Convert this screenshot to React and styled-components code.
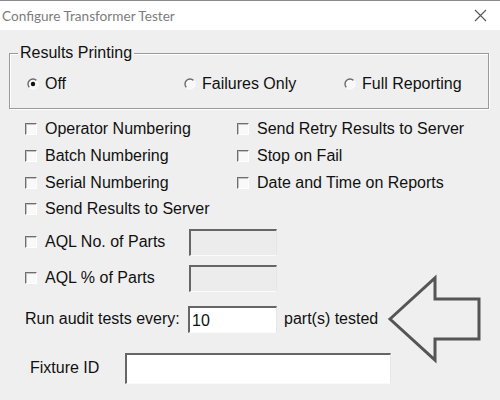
import React from 'react';
import styled, { createGlobalStyle } from 'styled-components';

const GlobalStyle = createGlobalStyle`
  html, body {
    margin: 0;
    padding: 0;
    background: #efefef;
  }
  body {
    font-family: "Liberation Sans", Arial, sans-serif;
    color: #111;
  }
`;

const Dialog = styled.div`
  position: relative;
  width: 500px;
  height: 400px;
  overflow: hidden;
  background: #efefef;
`;

const TitleBar = styled.div`
  display: flex;
  align-items: center;
  justify-content: space-between;
  height: 29px;
  background: #fff;
  border-top: 1px solid #8a8a8a;
  padding: 0 13px 0 2px;
  font-family: "Lato", "Liberation Sans", sans-serif;
  font-size: 13.6px;
  color: #7c7c7c;
`;

const Body = styled.div`
  display: flex;
  flex-direction: column;
  padding: 23px 11px 0 9px;
`;

const Group = styled.div`
  position: relative;
  box-sizing: border-box;
  height: 56px;
  border: 1px solid #9a9a9a;
  box-shadow: inset 1px 1px 0 #fff, 1px 1px 0 #fff;
  padding: 6px 0 0 17px;
  display: flex;
  align-items: center;
`;

const Legend = styled.span`
  position: absolute;
  left: 8px;
  top: -10px;
  padding: 0 2px;
  background: #efefef;
  font-size: 16px;
  line-height: 18px;
`;

const RadioRow = styled.div`
  display: grid;
  grid-template-columns: 157px 160px 1fr;
  width: 100%;
`;

const Option = styled.label`
  display: flex;
  align-items: center;
  gap: 6px;
  font-size: 16px;
`;

const CheckGrid = styled.div`
  display: grid;
  grid-template-columns: 212px 1fr;
  grid-auto-rows: 26.7px;
  padding-left: 16px;
  margin-top: 7px;
`;

const Check = styled.label`
  display: flex;
  align-items: center;
  gap: 8px;
  font-size: 16px;
  grid-column: ${(p) => p.col || 'auto'};
`;

const Box = styled.span`
  width: 10px;
  height: 10px;
  flex: none;
  background: #f9f9f9;
  border-top: 1px solid #6e6e6e;
  border-left: 1px solid #6e6e6e;
  border-right: 1px solid #fff;
  border-bottom: 1px solid #fff;
  box-shadow: inset 1px 1px 0 #c4c4c4;
`;

const FieldRow = styled.div`
  display: flex;
  align-items: center;
  height: ${(p) => p.h || 27}px;
  margin-top: ${(p) => p.mt || 0}px;
  padding-left: ${(p) => p.pl || 16}px;
`;

const FieldLabel = styled.span`
  display: flex;
  align-items: center;
  gap: 8px;
  width: ${(p) => p.w}px;
  font-size: 16px;
  flex: none;
`;

const Input = styled.div`
  box-sizing: border-box;
  width: ${(p) => p.w}px;
  height: ${(p) => p.h || 27}px;
  background: ${(p) => (p.disabled ? '#ececec' : '#fff')};
  border-top: 2px solid #666;
  border-left: 2px solid #666;
  border-right: 1px solid #e6e6e6;
  border-bottom: 1px solid #fafafa;
  padding: 3px 2px 0;
  font-size: 16px;
  line-height: 20px;
`;

const After = styled.span`
  margin-left: 7px;
  font-size: 16px;
`;

const Arrow = styled.svg`
  position: absolute;
  left: 386px;
  top: 274px;
`;

const Radio = ({ on }) => (
  <svg width="12" height="12" viewBox="0 0 12 12">
    <circle cx="6" cy="6" r="5" fill="#f8f8f8" />
    <path d="M2.46 9.54 A5 5 0 0 1 9.54 2.46" fill="none" stroke="#6a6a6a" strokeWidth="1.4" />
    <path d="M9.54 2.46 A5 5 0 0 1 2.46 9.54" fill="none" stroke="#fff" strokeWidth="1" />
    {on && <circle cx="6" cy="6" r="2.2" fill="#111" />}
  </svg>
);

const CloseIcon = () => (
  <svg width="13" height="13" viewBox="0 0 13 13">
    <path d="M1 1 L12 12 M12 1 L1 12" stroke="#555" strokeWidth="1.1" />
  </svg>
);

export default function App() {
  return (
    <Dialog>
      <GlobalStyle />
      <TitleBar>
        <span>Configure Transformer Tester</span>
        <CloseIcon />
      </TitleBar>
      <Body>
        <Group>
          <Legend>Results Printing</Legend>
          <RadioRow>
            <Option><Radio on />Off</Option>
            <Option><Radio />Failures Only</Option>
            <Option><Radio />Full Reporting</Option>
          </RadioRow>
        </Group>

        <CheckGrid>
          <Check><Box />Operator Numbering</Check>
          <Check><Box />Send Retry Results to Server</Check>
          <Check><Box />Batch Numbering</Check>
          <Check><Box />Stop on Fail</Check>
          <Check><Box />Serial Numbering</Check>
          <Check><Box />Date and Time on Reports</Check>
          <Check col="1 / 3"><Box />Send Results to Server</Check>
        </CheckGrid>

        <FieldRow mt={6}>
          <FieldLabel w={164}><Box />AQL No. of Parts</FieldLabel>
          <Input w={88} disabled />
        </FieldRow>
        <FieldRow mt={9}>
          <FieldLabel w={164}><Box />AQL % of Parts</FieldLabel>
          <Input w={88} disabled />
        </FieldRow>
        <FieldRow mt={14} pl={16}>
          <FieldLabel w={163}>Run audit tests every:</FieldLabel>
          <Input w={89}>10</Input>
          <After>part(s) tested</After>
        </FieldRow>
        <FieldRow mt={20} h={31} pl={21}>
          <FieldLabel w={95}>Fixture ID</FieldLabel>
          <Input w={266} h={31} />
        </FieldRow>
      </Body>

      <Arrow width="96" height="90" viewBox="0 0 96 90">
        <path
          d="M4 45 L49 4 L49 25 L93 25 L93 65 L49 65 L49 86 Z"
          fill="none"
          stroke="#555"
          strokeWidth="3"
          strokeLinejoin="miter"
        />
      </Arrow>
    </Dialog>
  );
}
